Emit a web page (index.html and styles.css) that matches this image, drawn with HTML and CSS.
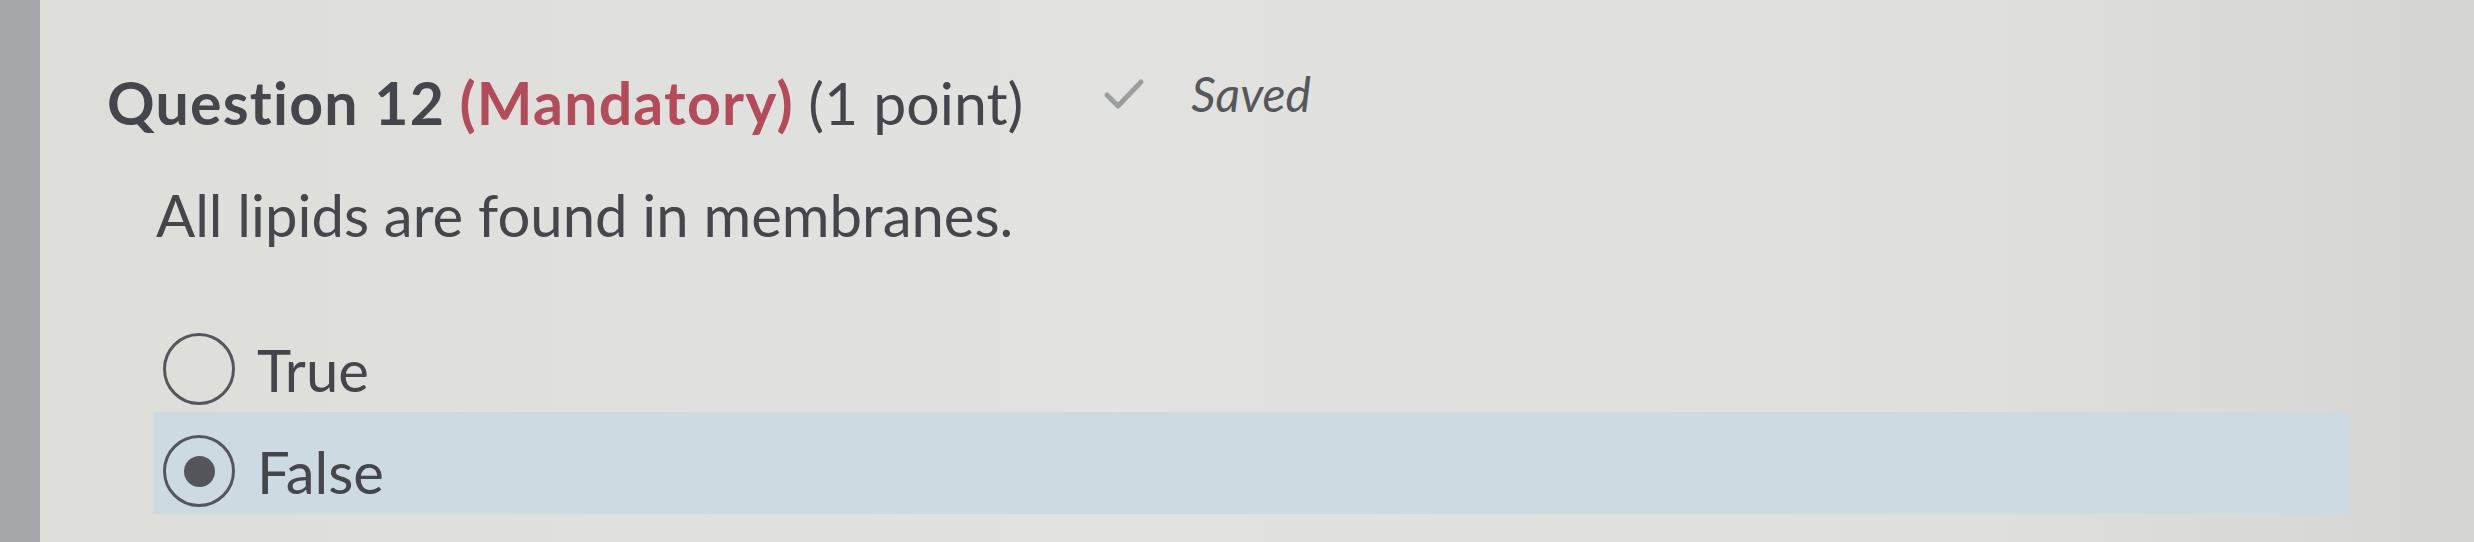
FILE: index.html
```html
<!DOCTYPE html>
<html lang="en">
<head>
    <meta charset="UTF-8">
    <meta name="viewport" content="width=device-width, initial-scale=1.0">
    <title>Quiz</title>
    <link rel="stylesheet" href="styles.css">
</head>
<body>
    <div class="page">
        <aside class="rail"></aside>
        <main class="question">
            <div class="question-head">
                <h2 class="question-title">
                    <span class="q-num">Question 12</span>
                    <span class="q-req">(Mandatory)</span>
                    <span class="q-pts">(1 point)</span>
                </h2>
                <div class="save-state">
                    <svg class="check" viewBox="0 0 42 32" width="42" height="32">
                        <path d="M4 17 L15 28 L38 4" fill="none" stroke="currentColor" stroke-width="5" stroke-linecap="round" stroke-linejoin="round"/>
                    </svg>
                    <span>Saved</span>
                </div>
            </div>
            <p class="question-text">All lipids are found in membranes.</p>
            <div class="options">
                <label class="option">
                    <span class="radio"></span>
                    <span class="option-label">True</span>
                </label>
                <label class="option selected">
                    <span class="radio checked"></span>
                    <span class="option-label">False</span>
                </label>
            </div>
        </main>
    </div>
</body>
</html>
```

FILE: styles.css
```css
:root {
    --text-color : #44464c;
    --req-color : #b24c5b;
    --rail-color : #a5a6aa;
    --select-color : #cedae1;
}

body {
    margin : 0;
    font-family : Lato, "Open Sans", sans-serif;
    font-variant-ligatures : none;
    color : var(--text-color);
    background : linear-gradient(90deg, #dddeda 0%, #e2e3e0 45%, #dfe0dc 80%, #d5d6d3 100%);
}

.page {
    display : flex;
    height : 542px;
}

.rail {
    width : 40px;
    background-color : var(--rail-color);
    flex-shrink : 0;
}

.question {
    flex : 1;
    padding : 69px 0 0 67px;
}

.question-head {
    display : flex;
    align-items : flex-start;
}

.question-title {
    margin : 0;
    font-size : 59px;
    font-weight : 700;
    line-height : 68px;
    white-space : nowrap;
}

.q-num,
.q-req {
    letter-spacing : 1.2px;
}

.q-req {
    color : var(--req-color);
}

.q-pts {
    font-weight : 400;
}

.save-state {
    display : flex;
    align-items : center;
    margin : -4px 0 0 80px;
    font-size : 48px;
    line-height : 58px;
    font-style : italic;
    color : #56575c;
}

.check {
    color : #9b9e9f;
    margin-right : 46px;
}

.question-text {
    margin : 44px 0 0 49px;
    font-size : 58px;
    line-height : 68px;
}

.options {
    margin : 61px 0 0 46px;
    width : 2195px;
}

.option {
    display : flex;
    align-items : center;
    height : 86px;
    padding : 16px 0 0 10px;
    font-size : 58px;
}

.option.selected {
    background-color : var(--select-color);
}

.radio {
    width : 66px;
    height : 66px;
    border : 3px solid #55565b;
    border-radius : 50%;
    display : flex;
    align-items : center;
    justify-content : center;
    flex-shrink : 0;
}

.radio.checked::after {
    content : "";
    width : 31px;
    height : 31px;
    border-radius : 50%;
    background-color : #55565b;
}

.option-label {
    margin-left : 22px;
}
```
